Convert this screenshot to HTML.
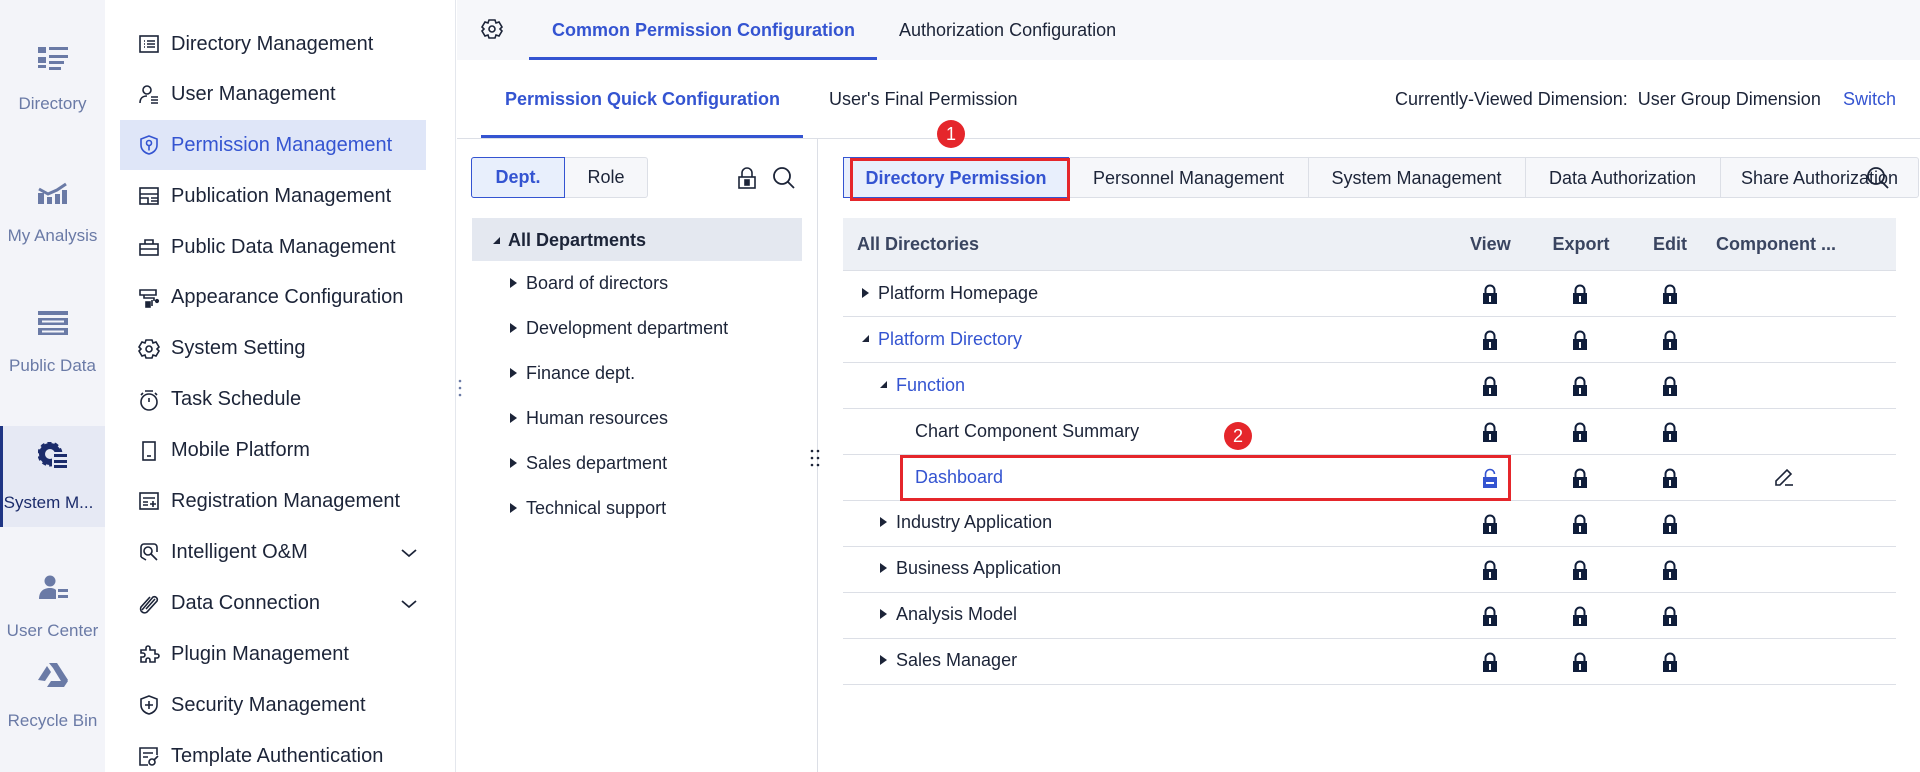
<!DOCTYPE html>
<html><head><meta charset="utf-8"><style>
*{margin:0;padding:0;box-sizing:border-box}
body{width:1920px;height:772px;overflow:hidden;background:#fff;font-family:"Liberation Sans",sans-serif;color:#1c2438;position:relative}
.a{position:absolute;white-space:nowrap}
.rail{left:0;top:0;width:105px;height:772px;background:#f3f4f9}
.rl{width:105px;text-align:center;font-size:17px;color:#6a7aa6}
.menu{left:105px;top:0;width:351px;height:772px;background:#fff;border-right:1px solid #e4e7ed}
.mi{left:171px;font-size:20px;color:#1c2438;line-height:24px}
.mic{left:138px;width:22px;height:22px}
.t18{font-size:18px;line-height:22px}
.tri{width:0;height:0;border-top:5px solid transparent;border-bottom:5px solid transparent;border-left:7px solid #1c2438}
.trid{width:0;height:0;border-left:7px solid transparent;border-bottom:7px solid #1c2438}
.hl{height:1px;background:#dcdfe6;left:843px;width:1053px}
.badge{width:28px;height:28px;border-radius:50%;background:#e5262b;color:#fff;font-size:18px;text-align:center;line-height:28px}
</style></head><body>
<svg width="0" height="0" style="position:absolute"><defs>
<symbol id="lk" viewBox="0 0 18 20"><path d="M4.5 10V6a4.5 4.5 0 0 1 9 0v4" fill="none" stroke="#0f1d3a" stroke-width="2"/><rect x="2" y="9" width="14" height="11" fill="#0f1d3a"/><rect x="8" y="12" width="2" height="6" fill="#fff"/></symbol>
</defs></svg>

<!-- rail -->
<div class="a rail"></div>
<svg class="a" style="left:38px;top:45px" width="30" height="26" viewBox="0 0 30 26" fill="#6a7aa6"><rect x="0" y="2" width="8" height="6"/><rect x="11" y="2" width="19" height="3"/><rect x="0" y="12" width="8" height="6"/><rect x="11" y="10" width="19" height="3"/><rect x="11" y="16" width="15" height="3"/><rect x="11" y="22" width="12" height="3"/><rect x="0" y="20" width="8" height="3"/></svg>
<div class="a rl" style="top:94px">Directory</div>
<svg class="a" style="left:38px;top:180px" width="30" height="24" viewBox="0 0 30 24" fill="#6a7aa6"><path d="M1 9l9 5 9-4 9-6" stroke="#6a7aa6" stroke-width="3" fill="none"/><rect x="0" y="13" width="6" height="11"/><rect x="9" y="17" width="5" height="7"/><rect x="17" y="14" width="5" height="10"/><rect x="24" y="10" width="5" height="14"/></svg>
<div class="a rl" style="top:226px">My Analysis</div>
<svg class="a" style="left:38px;top:311px" width="30" height="24" viewBox="0 0 30 24" fill="#6a7aa6"><rect x="0" y="0" width="30" height="4"/><rect x="0" y="7" width="30" height="7"/><rect x="0" y="17" width="30" height="7"/><rect x="4" y="9.5" width="22" height="2" fill="#f3f4f9"/><rect x="4" y="19.5" width="22" height="2" fill="#f3f4f9"/></svg>
<div class="a rl" style="top:356px">Public Data</div>
<div class="a" style="left:0;top:426px;width:105px;height:101px;background:#e6e9f4;border-left:3px solid #1f3584"></div>
<svg class="a" style="left:38px;top:442px" width="30" height="26" viewBox="0 0 30 26" fill="#1c2c6b"><circle cx="12" cy="12" r="8" fill="none" stroke="#1c2c6b" stroke-width="6"/><circle cx="12" cy="12" r="11" fill="none" stroke="#1c2c6b" stroke-width="3" stroke-dasharray="4 3"/><rect x="14" y="10" width="16" height="16" fill="#e6e9f4"/><rect x="16" y="12" width="13" height="3"/><rect x="16" y="18" width="13" height="3"/><rect x="16" y="23" width="13" height="3"/></svg>
<div class="a rl" style="top:493px;color:#1c2c6b;left:-4px">System M...</div>
<svg class="a" style="left:38px;top:575px" width="30" height="24" viewBox="0 0 30 24" fill="#6a7aa6"><circle cx="12" cy="6" r="5.5"/><path d="M1 24c0-8 5-11 11-11 3 0 5 1 6 2v9z"/><rect x="20" y="14" width="10" height="3"/><rect x="20" y="20" width="10" height="3"/></svg>
<div class="a rl" style="top:621px">User Center</div>
<svg class="a" style="left:38px;top:663px" width="30" height="24" viewBox="0 0 30 24" fill="#6a7aa6"><path d="M11 0h8l11 17-4 6L15 5z"/><path d="M0 17L9 3l4 6-6 9z"/><path d="M9 24l4-6h17l-4 6z"/></svg>
<div class="a rl" style="top:711px">Recycle Bin</div>

<!-- menu -->
<div class="a menu"></div>
<div class="a" style="left:120px;top:120px;width:306px;height:50px;background:#dfe6f8"></div>
<svg class="a mic" style="top:33px" viewBox="0 0 22 22" fill="none" stroke="#1c2438" stroke-width="1.6"><rect x="2" y="3" width="18" height="16"/><path d="M6 8h1M9 8h8M6 11h1M9 11h8M6 14h1M9 14h8"/></svg>
<div class="a mi" style="top:32px">Directory Management</div>
<svg class="a mic" style="top:84px" viewBox="0 0 22 22" fill="none" stroke="#1c2438" stroke-width="1.6"><circle cx="9" cy="6" r="4"/><path d="M2 19c0-5 3-7 7-7M13 13h7M13 16h7M13 19h7"/></svg>
<div class="a mi" style="top:82px">User Management</div>
<svg class="a mic" style="top:134px" viewBox="0 0 22 22" fill="none" stroke="#3454d1" stroke-width="1.6"><path d="M11 2l8 3v6c0 5-4 8-8 9-4-1-8-4-8-9V5z"/><circle cx="11" cy="9" r="2.5"/><path d="M11 11.5v5"/></svg>
<div class="a mi" style="top:133px;color:#3454d1">Permission Management</div>
<svg class="a mic" style="top:185px" viewBox="0 0 22 22" fill="none" stroke="#1c2438" stroke-width="1.6"><rect x="2" y="3" width="18" height="16"/><path d="M2 9h18M2 13h8v6M13 13h7M13 16h7"/></svg>
<div class="a mi" style="top:184px">Publication Management</div>
<svg class="a mic" style="top:236px" viewBox="0 0 22 22" fill="none" stroke="#1c2438" stroke-width="1.6"><rect x="2" y="8" width="18" height="11"/><path d="M7 8V4h8v4M2 13h18"/></svg>
<div class="a mi" style="top:235px">Public Data Management</div>
<svg class="a mic" style="top:287px" viewBox="0 0 22 22" fill="none" stroke="#1c2438" stroke-width="1.6"><path d="M2 3h16v5H2zM6 8v3h10v3M14 13v6"/><rect x="8" y="15" width="4" height="5" fill="#1c2438"/><circle cx="19" cy="14" r="1.3" fill="#1c2438"/></svg>
<div class="a mi" style="top:285px">Appearance Configuration</div>
<svg class="a mic" style="top:338px" viewBox="0 0 22 22" fill="none" stroke="#1c2438" stroke-width="1.6"><path d="M8 2h6l1 3 3-1 3 5-2 2 2 2-3 5-3-1-1 3H8l-1-3-3 1-3-5 2-2-2-2 3-5 3 1z"/><circle cx="11" cy="11" r="3"/></svg>
<div class="a mi" style="top:336px">System Setting</div>
<svg class="a mic" style="top:389px" viewBox="0 0 22 22" fill="none" stroke="#1c2438" stroke-width="1.6"><circle cx="11" cy="13" r="8"/><path d="M11 9v4M7 2h8M3 6l2-2M19 6l-2-2"/></svg>
<div class="a mi" style="top:387px">Task Schedule</div>
<svg class="a mic" style="top:440px" viewBox="0 0 22 22" fill="none" stroke="#1c2438" stroke-width="1.6"><rect x="5" y="2" width="12" height="18"/><path d="M9 16h4"/></svg>
<div class="a mi" style="top:438px">Mobile Platform</div>
<svg class="a mic" style="top:490px" viewBox="0 0 22 22" fill="none" stroke="#1c2438" stroke-width="1.6"><rect x="2" y="3" width="18" height="16"/><path d="M5 8h12M5 12h5M5 15h5M15 11v6M12 14h6"/></svg>
<div class="a mi" style="top:489px">Registration Management</div>
<svg class="a mic" style="top:541px" viewBox="0 0 22 22" fill="none" stroke="#1c2438" stroke-width="1.6"><path d="M3 16V6a3 3 0 0 1 3-3h10a3 3 0 0 1 3 3v5"/><circle cx="10" cy="10" r="4"/><path d="M13 13l6 6M3 16l5 3"/></svg>
<div class="a mi" style="top:540px">Intelligent O&amp;M</div>
<svg class="a" style="left:400px;top:547px" width="18" height="12" viewBox="0 0 18 12" fill="none" stroke="#1c2438" stroke-width="1.8"><path d="M2 3l7 6 7-6"/></svg>
<svg class="a mic" style="top:592px" viewBox="0 0 22 22" fill="none" stroke="#1c2438" stroke-width="1.6"><path d="M4 18L15 5a3 3 0 0 1 4 4L9 20a4 4 0 0 1-6-5l9-10"/><path d="M8 17l9-10"/></svg>
<div class="a mi" style="top:591px">Data Connection</div>
<svg class="a" style="left:400px;top:598px" width="18" height="12" viewBox="0 0 18 12" fill="none" stroke="#1c2438" stroke-width="1.8"><path d="M2 3l7 6 7-6"/></svg>
<svg class="a mic" style="top:643px" viewBox="0 0 22 22" fill="none" stroke="#1c2438" stroke-width="1.6"><path d="M3 7h5V5a2 2 0 0 1 4 0v2h5v4h2a2 2 0 0 1 0 4h-2v4h-5v-2a2 2 0 0 0-4 0v2H3v-5h2a2 2 0 0 0 0-4H3z"/></svg>
<div class="a mi" style="top:642px">Plugin Management</div>
<svg class="a mic" style="top:694px" viewBox="0 0 22 22" fill="none" stroke="#1c2438" stroke-width="1.6"><path d="M11 2l8 3v6c0 5-4 8-8 9-4-1-8-4-8-9V5z"/><path d="M11 7v8M7 11h8"/></svg>
<div class="a mi" style="top:693px">Security Management</div>
<svg class="a mic" style="top:745px" viewBox="0 0 22 22" fill="none" stroke="#1c2438" stroke-width="1.6"><path d="M19 10V3H2v17h8M5 8h10M5 12h5"/><circle cx="14" cy="17" r="3"/><path d="M16 15l4-4"/></svg>
<div class="a mi" style="top:744px">Template Authentication</div>

<!-- top bar -->
<div class="a" style="left:457px;top:0;width:1463px;height:60px;background:#f6f7fa"></div>
<svg class="a" style="left:481px;top:18px" width="22" height="22" viewBox="0 0 22 22" fill="none" stroke="#1c2438" stroke-width="1.6"><path d="M8 2h6l1 3 3-1 3 5-2 2 2 2-3 5-3-1-1 3H8l-1-3-3 1-3-5 2-2-2-2 3-5 3 1z"/><circle cx="11" cy="11" r="3"/></svg>
<div class="a t18" style="left:552px;top:19px;font-weight:bold;color:#3454d1">Common Permission Configuration</div>
<div class="a" style="left:529px;top:57px;width:348px;height:3px;background:#3454d1"></div>
<div class="a t18" style="left:899px;top:19px">Authorization Configuration</div>

<!-- second row -->
<div class="a t18" style="left:505px;top:88px;font-weight:bold;color:#3454d1">Permission Quick Configuration</div>
<div class="a" style="left:481px;top:135px;width:322px;height:3px;background:#3454d1"></div>
<div class="a t18" style="left:829px;top:88px">User's Final Permission</div>
<div class="a t18" style="left:1395px;top:88px">Currently-Viewed Dimension:&nbsp; User Group Dimension</div>
<div class="a t18" style="left:1843px;top:88px;color:#3454d1">Switch</div>
<div class="a" style="left:457px;top:138px;width:1463px;height:1px;background:#dcdfe6"></div>
<div class="a" style="left:817px;top:139px;width:1px;height:633px;background:#dcdfe6"></div>

<!-- dept panel -->
<div class="a" style="left:471px;top:157px;width:177px;height:41px;border:1px solid #dcdfe6;border-radius:3px;background:#f6f7fa"></div>
<div class="a t18" style="left:471px;top:157px;width:94px;height:41px;border:1px solid #3454d1;border-radius:3px 0 0 3px;background:#e8effc;color:#3454d1;font-weight:bold;text-align:center;line-height:39px">Dept.</div>
<div class="a t18" style="left:565px;top:157px;width:82px;height:41px;text-align:center;line-height:41px">Role</div>
<svg class="a" style="left:737px;top:166px" width="20" height="24" viewBox="0 0 20 24" fill="none" stroke="#1c2438" stroke-width="1.6"><path d="M5 11V7a5 5 0 0 1 10 0v4"/><rect x="2" y="11" width="16" height="11"/><rect x="8" y="14" width="4" height="5" fill="#1c2438"/></svg>
<svg class="a" style="left:772px;top:166px" width="24" height="24" viewBox="0 0 24 24" fill="none" stroke="#1c2438" stroke-width="1.8"><circle cx="10" cy="10" r="8"/><path d="M16 16l6 6"/></svg>
<div class="a" style="left:472px;top:218px;width:330px;height:43px;background:#e4e8f0"></div>
<div class="a trid" style="left:493px;top:237px"></div>
<div class="a t18" style="left:508px;top:229px;font-weight:bold">All Departments</div>
<div class="a tri" style="left:510px;top:278px"></div><div class="a t18" style="left:526px;top:272px">Board of directors</div>
<div class="a tri" style="left:510px;top:323px"></div><div class="a t18" style="left:526px;top:317px">Development department</div>
<div class="a tri" style="left:510px;top:368px"></div><div class="a t18" style="left:526px;top:362px">Finance dept.</div>
<div class="a tri" style="left:510px;top:413px"></div><div class="a t18" style="left:526px;top:407px">Human resources</div>
<div class="a tri" style="left:510px;top:458px"></div><div class="a t18" style="left:526px;top:452px">Sales department</div>
<div class="a tri" style="left:510px;top:503px"></div><div class="a t18" style="left:526px;top:497px">Technical support</div>
<svg class="a" style="left:455px;top:378px" width="10" height="22" fill="#6a7aa6"><circle cx="5" cy="3" r="1.3"/><circle cx="5" cy="10" r="1.3"/><circle cx="5" cy="17" r="1.3"/></svg>
<svg class="a" style="left:809px;top:448px" width="12" height="22" fill="#1c2438"><circle cx="3" cy="3" r="1.3"/><circle cx="3" cy="10" r="1.3"/><circle cx="3" cy="17" r="1.3"/><circle cx="9" cy="3" r="1.3"/><circle cx="9" cy="10" r="1.3"/><circle cx="9" cy="17" r="1.3"/></svg>

<!-- category tabs -->
<div class="a" style="left:843px;top:157px;width:1076px;height:41px;border:1px solid #dcdfe6;border-radius:3px;background:#f6f7fa"></div>
<div class="a" style="left:843px;top:157px;width:226px;height:41px;border:1px solid #3454d1;background:#e8effc"></div>
<div class="a t18" style="left:843px;top:167px;width:226px;text-align:center;font-weight:bold;color:#3454d1">Directory Permission</div>
<div class="a" style="left:1069px;top:157px;width:1px;height:41px;background:#dcdfe6"></div>
<div class="a t18" style="left:1069px;top:167px;width:239px;text-align:center">Personnel Management</div>
<div class="a" style="left:1308px;top:157px;width:1px;height:41px;background:#dcdfe6"></div>
<div class="a t18" style="left:1308px;top:167px;width:217px;text-align:center">System Management</div>
<div class="a" style="left:1525px;top:157px;width:1px;height:41px;background:#dcdfe6"></div>
<div class="a t18" style="left:1525px;top:167px;width:195px;text-align:center">Data Authorization</div>
<div class="a" style="left:1720px;top:157px;width:1px;height:41px;background:#dcdfe6"></div>
<div class="a t18" style="left:1720px;top:167px;width:199px;text-align:center">Share Authorization</div>
<svg class="a" style="left:1866px;top:166px" width="24" height="24" viewBox="0 0 24 24" fill="none" stroke="#1c2438" stroke-width="1.8"><circle cx="10" cy="10" r="8"/><path d="M16 16l6 6"/></svg>
<div class="a" style="left:850px;top:158px;width:220px;height:43px;border:3px solid #e5262b"></div>
<div class="a badge" style="left:937px;top:120px">1</div>

<!-- table -->
<div class="a" style="left:843px;top:218px;width:1053px;height:53px;background:#edf0f5;border-bottom:1px solid #dcdfe6"></div>
<div class="a t18" style="left:857px;top:233px;font-weight:bold;color:#3a4560">All Directories</div>
<div class="a t18" style="left:1470px;top:233px;width:40px;text-align:center;font-weight:bold;color:#3a4560">View</div>
<div class="a t18" style="left:1551px;top:233px;width:60px;text-align:center;font-weight:bold;color:#3a4560">Export</div>
<div class="a t18" style="left:1650px;top:233px;width:40px;text-align:center;font-weight:bold;color:#3a4560">Edit</div>
<div class="a t18" style="left:1716px;top:233px;font-weight:bold;color:#3a4560">Component ...</div>

<div class="a hl" style="top:316px"></div><div class="a hl" style="top:362px"></div><div class="a hl" style="top:408px"></div><div class="a hl" style="top:454px"></div><div class="a hl" style="top:500px"></div><div class="a hl" style="top:546px"></div><div class="a hl" style="top:592px"></div><div class="a hl" style="top:638px"></div><div class="a hl" style="top:684px"></div>

<div class="a tri" style="left:862px;top:288px"></div><div class="a t18" style="left:878px;top:282px">Platform Homepage</div>
<div class="a trid" style="left:862px;top:335px"></div><div class="a t18" style="left:878px;top:328px;color:#3454d1">Platform Directory</div>
<div class="a trid" style="left:880px;top:381px"></div><div class="a t18" style="left:896px;top:374px;color:#3454d1">Function</div>
<div class="a t18" style="left:915px;top:420px">Chart Component Summary</div>
<div class="a t18" style="left:915px;top:466px;color:#3454d1">Dashboard</div>
<div class="a tri" style="left:880px;top:517px"></div><div class="a t18" style="left:896px;top:511px">Industry Application</div>
<div class="a tri" style="left:880px;top:563px"></div><div class="a t18" style="left:896px;top:557px">Business Application</div>
<div class="a tri" style="left:880px;top:609px"></div><div class="a t18" style="left:896px;top:603px">Analysis Model</div>
<div class="a tri" style="left:880px;top:655px"></div><div class="a t18" style="left:896px;top:649px">Sales Manager</div>

<svg class="a" style="left:1481px;top:284px" width="200" height="390" viewBox="0 0 200 390">
<g id="r"><use href="#lk" x="0" y="0" width="18" height="20"/><use href="#lk" x="90" y="0" width="18" height="20"/><use href="#lk" x="180" y="0" width="18" height="20"/></g>
<use href="#r" y="46"/><use href="#r" y="92"/><use href="#r" y="138"/>
<g transform="translate(0,184)"><path d="M4.5 10V6a4.5 4.5 0 0 1 9 0" fill="none" stroke="#3454d1" stroke-width="1.6"/><rect x="2" y="9" width="14" height="11" fill="#3454d1"/><rect x="5" y="14" width="8" height="2" fill="#fff"/><use href="#lk" x="90" y="0" width="18" height="20"/><use href="#lk" x="180" y="0" width="18" height="20"/></g>
<use href="#r" y="230"/><use href="#r" y="276"/><use href="#r" y="322"/><use href="#r" y="368"/>
</svg>
<svg class="a" style="left:1773px;top:466px" width="22" height="22" viewBox="0 0 22 22" fill="none" stroke="#1c2438" stroke-width="1.6"><path d="M3 19v-4L14 4l4 4L7 19z"/><path d="M12 19h8"/></svg>

<div class="a" style="left:900px;top:455px;width:611px;height:46px;border:3px solid #e5262b"></div>
<div class="a badge" style="left:1224px;top:422px">2</div>
</body></html>
